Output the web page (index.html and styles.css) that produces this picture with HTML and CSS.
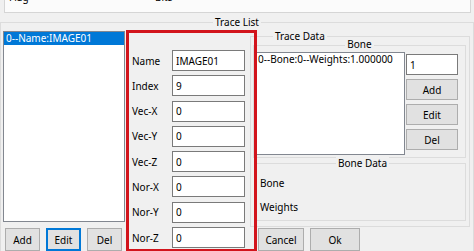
FILE: index.html
```html
<html>
<head>
<link rel="stylesheet" href="styles.css">
</head>
  <body>
    <!-- property strip above, scrolled so only its bottom shows -->
    <div class="top-panel">
      <div class="top-row"><span class="top-flag">Flag</span><span class="top-type">Bits</span></div>
    </div>

    <div class="group trace-list">
      <span class="group-title centered">Trace List</span>
      <div class="trace-body">

        <div class="list-col">
          <div class="listbox trace-listbox">
            <div class="item selected">0--Name:IMAGE01</div>
          </div>
          <div class="btn-row">
            <button class="btn">Add</button>
            <button class="btn focused">Edit</button>
            <button class="btn">Del</button>
          </div>
        </div>

        <div class="fields">
          <label class="field"><span class="field-name">Name</span><input class="textbox" value="IMAGE01"></label>
          <label class="field"><span class="field-name">Index</span><input class="textbox" value="9"></label>
          <label class="field"><span class="field-name">Vec-X</span><input class="textbox" value="0"></label>
          <label class="field"><span class="field-name">Vec-Y</span><input class="textbox" value="0"></label>
          <label class="field"><span class="field-name">Vec-Z</span><input class="textbox" value="0"></label>
          <label class="field"><span class="field-name">Nor-X</span><input class="textbox" value="0"></label>
          <label class="field"><span class="field-name">Nor-Y</span><input class="textbox" value="0"></label>
          <label class="field"><span class="field-name">Nor-Z</span><input class="textbox" value="0"></label>
        </div>

        <div class="data-col">
          <div class="group trace-data">
            <span class="group-title left">Trace Data</span>

            <div class="group bone">
              <span class="group-title centered bone-title">Bone</span>
              <div class="bone-body">
                <div class="listbox bone-listbox">
                  <div class="item">0--Bone:0--Weights:1.000000</div>
                </div>
                <div class="bone-side">
                  <input class="textbox bone-count" value="1">
                  <button class="btn side-btn">Add</button>
                  <button class="btn side-btn">Edit</button>
                  <button class="btn side-btn">Del</button>
                </div>
              </div>
            </div>

            <div class="group bone-data">
              <span class="group-title centered">Bone Data</span>
              <div class="bd-row">Bone</div>
              <div class="bd-row">Weights</div>
            </div>
          </div>
          <div class="btn-row dialog-btns">
            <button class="btn cancel-btn">Cancel</button>
            <button class="btn ok-btn">Ok</button>
          </div>
        </div>

      </div>
    </div>
  </body>
</html>
```

FILE: styles.css
```css
body {
    margin: 0;
    width: 474px;
    height: 251px;
    overflow: hidden;
    background: #f0f0f0;
    font-family: "Noto Sans", "Liberation Sans", sans-serif;
    font-size: 10px;
    color: #000;
}

/* strip of the panel above, only the bottom edge is on screen */
.top-panel {
    height: 12px;
    margin: 0 3px 0 4px;
    border: 1px solid #d5d5d5;
    border-top: none;
    background: #fbfbfb;
    overflow: hidden;
}

.top-row {
    display: flex;
    margin-top: -10px;
    line-height: 15px;
}

.top-flag {
    margin-left: 4px;
    width: 146px;
}

/* group boxes: border with a title sitting on the top line */
.group {
    display: flex;
    flex-direction: column;
    border: 1px solid #dcdcdc;
}

.group-title {
    margin-top: -8px;
    padding: 0 2px;
    line-height: 15px;
    background: #f0f0f0;
}

.group-title.centered {
    align-self: center;
}

.group-title.left {
    align-self: flex-start;
    margin-left: 22px;
}

.trace-list {
    margin-top: 9px;
    height: 240px;
    border-bottom: none;
}

.trace-body {
    display: flex;
    align-items: flex-start;
}

/* left column */
.list-col {
    margin-left: 2px;
    width: 122px;
}

.listbox {
    background: #fff;
    border: 1px solid #828790;
    box-sizing: border-box;
}

.item {
    height: 13px;
    line-height: 13px;
    padding-left: 2px;
    white-space: nowrap;
}

.item.selected {
    background: #0078d7;
    color: #fff;
}

.trace-listbox {
    margin-top: 1px;
    height: 191px;
}

.btn-row {
    display: flex;
    gap: 6px;
}

.list-col .btn-row {
    margin-top: 6px;
    padding-left: 2px;
}

.btn {
    height: 23px;
    padding: 0;
    font: inherit;
    color: #000;
    background: #e1e1e1;
    border: 1px solid #adadad;
    box-sizing: border-box;
}

.list-col .btn {
    width: 35px;
}

.btn.focused {
    border: 2px solid #0078d7;
}

/* fields, outlined in red */
.fields {
    position: relative;
    z-index: 1;
    margin-left: 1px;
    margin-right: -7px;
    width: 131px;
    height: 222px;
    box-sizing: border-box;
    border: 3px solid #d2141c;
    padding: 17px 0 0 3px;
    display: flex;
    flex-direction: column;
    gap: 4.3px;
}

.field {
    display: flex;
    align-items: center;
    height: 21px;
}

.field-name {
    width: 40px;
}

.textbox {
    width: 73px;
    height: 21px;
    box-sizing: border-box;
    border: 1px solid #7a7a7a;
    background: #fff;
    padding: 0 0 0 3px;
    font: inherit;
    color: #000;
    outline: none;
}

/* right column */
.data-col {
    flex: 1;
    display: flex;
    flex-direction: column;
}

.trace-data {
    margin: 6px 3px 0 0;
    padding-bottom: 5px;
}

.bone {
    margin: 1px 3px 0 2px;
    padding-bottom: 2px;
}

.bone-title {
    margin-top: -9px;
}

.bone-body {
    display: flex;
    align-items: flex-start;
}

.bone-listbox {
    margin-left: 1px;
    width: 150px;
    height: 103px;
}

.bone-side {
    margin-left: 1px;
    width: 52px;
    display: flex;
    flex-direction: column;
    gap: 4px;
}

.bone-count {
    width: 52px;
    margin-top: 2px;
}

.side-btn {
    height: 21px;
}

.bone-data {
    margin: 5px 3px 0 4px;
    padding: 0 0 5px 4px;
    gap: 9px;
}

.bd-row {
    line-height: 15px;
}

.bone-data .group-title {
    margin-bottom: -4px;
}

.dialog-btns {
    margin: 1px 0 0 8px;
}

.cancel-btn {
    width: 46px;
}

.ok-btn {
    width: 50px;
}
```
